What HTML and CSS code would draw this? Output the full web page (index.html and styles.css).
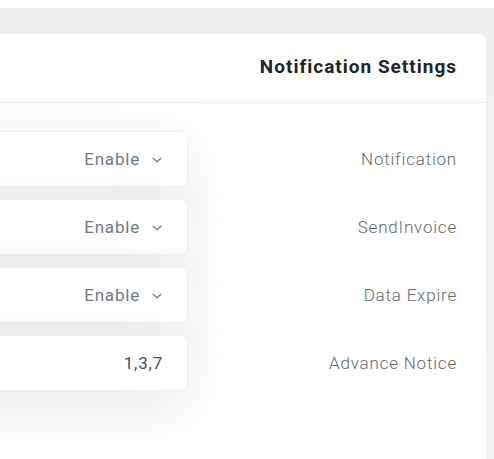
FILE: index.html
```html
<!DOCTYPE html>
<html lang="en">
<head>
<meta charset="utf-8">
<link rel="stylesheet" href="styles.css">
</head>
<body>
<div class="topbar"></div>
<main class="page">
  <section class="card">
    <header class="card-head">
      <h2 class="card-title">Notification Settings</h2>
    </header>
    <div class="card-body">
      <div class="row">
        <div class="field select"><span class="value">Enable</span><svg class="chev" viewBox="0 0 12 8" width="12" height="8"><path d="M2 2.2 6 5.8 10 2.2" fill="none" stroke="currentColor" stroke-width="1.2" stroke-linecap="round" stroke-linejoin="round"/></svg></div>
        <div class="label">Notification</div>
      </div>
      <div class="row">
        <div class="field select"><span class="value">Enable</span><svg class="chev" viewBox="0 0 12 8" width="12" height="8"><path d="M2 2.2 6 5.8 10 2.2" fill="none" stroke="currentColor" stroke-width="1.2" stroke-linecap="round" stroke-linejoin="round"/></svg></div>
        <div class="label">SendInvoice</div>
      </div>
      <div class="row">
        <div class="field select"><span class="value">Enable</span><svg class="chev" viewBox="0 0 12 8" width="12" height="8"><path d="M2 2.2 6 5.8 10 2.2" fill="none" stroke="currentColor" stroke-width="1.2" stroke-linecap="round" stroke-linejoin="round"/></svg></div>
        <div class="label">Data Expire</div>
      </div>
      <div class="row">
        <div class="field text"><span class="value">1,3,7</span></div>
        <div class="label">Advance Notice</div>
      </div>
    </div>
  </section>
</main>
</body>
</html>
```
FILE: styles.css
```css
html, body {
  margin: 0;
  padding: 0;
}
body {
  width: 494px;
  height: 459px;
  overflow: hidden;
  background: #f1f2f4;
  font-family: Roboto, "Liberation Sans", sans-serif;
}
.topbar {
  height: 8px;
  background: #ffffff;
}
.page {
  padding: 26px 8px 0 0;
  background: linear-gradient(180deg, #eff0f2 0%, #f2f3f5 100%);
  height: 425px;
}
.card {
  margin-left: -200px;
  background: #ffffff;
  border-radius: 0 8px 0 0;
  height: 425px;
  overflow: hidden;
}
.card-head {
  height: 68px;
  border-bottom: 1px solid #e9ecef;
  display: flex;
  align-items: center;
  justify-content: flex-end;
  padding-right: 29px;
}
.card-title {
  margin: 0 0 4px 0;
  font-size: 19px;
  font-weight: 700;
  letter-spacing: 1px;
  color: #222528;
}
.card-body {
  padding: 28px 29px 0 0;
  display: flex;
  flex-direction: column;
  gap: 12px;
}
.row {
  display: grid;
  grid-template-columns: 1fr 269px;
  align-items: center;
}
.field {
  height: 56px;
  box-sizing: border-box;
  border: 1px solid #eef0f3;
  border-radius: 7px;
  background: #ffffff;
  display: flex;
  align-items: center;
  justify-content: flex-end;
  padding-right: 24px;
  box-shadow: 0 14px 64px rgba(30, 40, 60, 0.1);
}
.select .value {
  color: #6e7b8e;
  font-size: 17px;
  letter-spacing: 0.8px;
}
.chev {
  margin-left: 11px;
  color: #6e7b8e;
  margin-top: 2px;
}
.text .value {
  color: #4a4d52;
  font-size: 17px;
  letter-spacing: 0.8px;
}
.label {
  text-align: right;
  font-size: 17px;
  font-weight: 300;
  letter-spacing: 0.8px;
  color: #66696e;
}
```
